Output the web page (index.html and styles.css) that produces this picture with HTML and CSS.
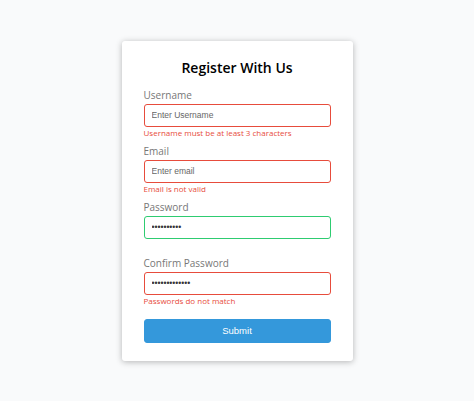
FILE: index.html
```html
<!DOCTYPE html>
<html lang="en">
<head>
<meta charset="UTF-8">
<title>Register With Us</title>
<link rel="stylesheet" href="styles.css">
</head>
<body>
  <div class="container">
    <form class="form">
      <h2 class="title">Register With Us</h2>
      <div class="form-control error">
        <label for="username">Username</label>
        <input type="text" id="username" placeholder="Enter Username">
        <small>Username must be at least 3 characters</small>
      </div>
      <div class="form-control error">
        <label for="email">Email</label>
        <input type="text" id="email" placeholder="Enter email">
        <small>Email is not valid</small>
      </div>
      <div class="form-control success">
        <label for="password">Password</label>
        <input type="password" id="password" value="1234567890">
        <small>Error message</small>
      </div>
      <div class="form-control error">
        <label for="password2">Confirm Password</label>
        <input type="password" id="password2" value="1234567890123">
        <small>Passwords do not match</small>
      </div>
      <button type="button" class="submit">Submit</button>
    </form>
  </div>
</body>
</html>
```
FILE: styles.css
```css
* { box-sizing: border-box; }
body {
  margin: 0;
  background: #f9fafb;
  font-family: "Open Sans", sans-serif;
  display: flex;
  align-items: center;
  justify-content: center;
  min-height: 100vh;
}
.container {
  background: #fff;
  border-radius: 3px;
  box-shadow: 0 1px 6px rgba(0, 0, 0, 0.28);
  width: 231px;
}
.form {
  padding: 16px 22px 18px;
}
.title {
  margin: 0 0 9px;
  text-align: center;
  font-size: 14px;
  line-height: 22px;
  font-weight: 600;
  color: #000;
}
.form-control {
  margin-bottom: 5px;
}
.form-control label {
  display: block;
  color: #777;
  font-size: 10px;
  line-height: 14px;
  margin-bottom: 2px;
}
.form-control input {
  display: block;
  width: 100%;
  height: 23px;
  border: 1.5px solid #f0f0f0;
  border-radius: 3px;
  padding: 0 7px;
  font-family: "Liberation Sans", Arial, sans-serif;
  font-size: 8.5px;
  color: #333;
  outline: none;
}
.form-control input::placeholder { color: #666; }
.form-control.error input { border-color: #e74c3c; }
.form-control.success input { border-color: #2ecc71; }
.form-control small {
  display: block;
  color: #e74c3c;
  font-size: 8px;
  line-height: 12px;
  visibility: hidden;
}
.form-control.error small { visibility: visible; }
.submit {
  display: block;
  width: 100%;
  height: 24px;
  margin-top: 12px;
  background: #3498db;
  border: 1px solid #3498db;
  border-radius: 3px;
  color: #fff;
  font-family: "Liberation Sans", Arial, sans-serif;
  font-size: 9.5px;
  cursor: pointer;
}
```
